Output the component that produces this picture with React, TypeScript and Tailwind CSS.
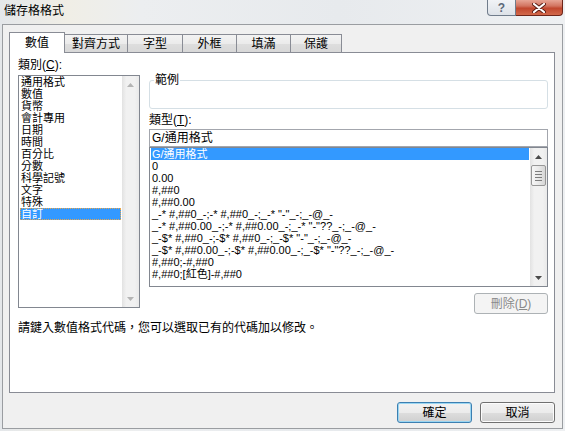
import React from "react";

const categories = [
  "通用格式",
  "數值",
  "貨幣",
  "會計專用",
  "日期",
  "時間",
  "百分比",
  "分數",
  "科學記號",
  "文字",
  "特殊",
  "自訂",
];

const formats = [
  "G/通用格式",
  "0",
  "0.00",
  "#,##0",
  "#,##0.00",
  '_-* #,##0_-;-* #,##0_-;_-* "-"_-;_-@_-',
  '_-* #,##0.00_-;-* #,##0.00_-;_-* "-"??_-;_-@_-',
  '_-$* #,##0_-;-$* #,##0_-;_-$* "-"_-;_-@_-',
  '_-$* #,##0.00_-;-$* #,##0.00_-;_-$* "-"??_-;_-@_-',
  "#,##0;-#,##0",
  "#,##0;[紅色]-#,##0",
];

const tabs = [
  { label: "對齊方式", w: "w-[63px]" },
  { label: "字型", w: "w-[55px]" },
  { label: "外框", w: "w-[54px]" },
  { label: "填滿", w: "w-[54px]" },
  { label: "保護", w: "w-[51px]" },
];

function Arrow({ up, color }: { up?: boolean; color: string }) {
  return (
    <svg width="7" height="4" viewBox="0 0 7 4">
      <path d={up ? "M0 4 L3.5 0 L7 4 Z" : "M0 0 L7 0 L3.5 4 Z"} fill={color} />
    </svg>
  );
}

function ScrollBar({ disabled }: { disabled?: boolean }) {
  const c = disabled ? "#b4b4b4" : "#4a4a4a";
  return (
    <div className="flex w-[17px] flex-col bg-[linear-gradient(to_right,#e2e2e2,#f1f1f1_25%,#f1f1f1_75%,#e9e9e9)]">
      <div className="flex h-[17px] items-center justify-center">
        <Arrow up color={c} />
      </div>
      {!disabled && (
        <div className="mx-[1px] flex h-[21px] flex-col items-center justify-center gap-[2px] rounded-[2px] border border-[#979797] bg-[linear-gradient(to_right,#f6f6f6,#e9e9e9_50%,#d6d6d6)]">
          <div className="h-px w-[7px] bg-[#7d7d7d]" />
          <div className="h-px w-[7px] bg-[#7d7d7d]" />
          <div className="h-px w-[7px] bg-[#7d7d7d]" />
          <div className="h-px w-[7px] bg-[#7d7d7d]" />
        </div>
      )}
      <div className="flex-1" />
      <div className="flex h-[17px] items-center justify-center">
        <Arrow color={c} />
      </div>
    </div>
  );
}

export default function App() {
  return (
    <div className="flex h-[431px] w-[565px] flex-col overflow-hidden bg-[linear-gradient(to_right,#e4e7ea,#f0eee6_12%,#eceef0_25%,#e7eaed_60%,#eef0f2)] font-['Liberation_Sans','Noto_Sans_CJK_TC',sans-serif] text-[12px] leading-[12px] text-black">
      {/* Title bar */}
      <div className="flex h-[24px] items-start justify-between">
        <span className="pl-[4px] pt-[4px] font-['Noto_Sans_CJK_TC',sans-serif]">儲存格格式</span>
        <div className="mr-[2px] flex">
          <div className="flex h-[16px] w-[29px] items-center justify-center rounded-bl-[4px] border border-t-0 border-[#707c8b] bg-[linear-gradient(to_bottom,#f1f3f6,#dde2e8)] text-[12px] font-bold text-[#5b6879]">
            ?
          </div>
          <div className="flex h-[16px] w-[47px] items-center justify-center rounded-br-[4px] border border-l-0 border-t-0 border-[#6e2519] bg-[linear-gradient(to_bottom,#e7a595,#d27460_40%,#c1472e_55%,#d2694b)]">
            <svg width="14" height="10" viewBox="0 0 14 10">
              <path d="M2 1 L12 9 M12 1 L2 9" stroke="#5a1d14" strokeWidth="4" strokeLinecap="round" />
              <path d="M2 1 L12 9 M12 1 L2 9" stroke="#ffffff" strokeWidth="2.2" strokeLinecap="round" />
            </svg>
          </div>
        </div>
      </div>

      {/* Client area */}
      <div className="mx-[2px] flex h-[405px] flex-col border border-[#9a9da1] bg-[#f0f0f0] pl-[6px] pr-[7px] pt-[7px]">
        {/* Tabs */}
        <div className="relative z-10 -mb-px flex items-end">
          <div className="flex h-[21px] w-[56px] items-center justify-center border-x border-t border-[#898c95] bg-white">
            數值
          </div>
          {tabs.map((t) => (
            <div
              key={t.label}
              className={`flex h-[19px] items-center justify-center border-y border-r border-[#898c95] bg-[linear-gradient(to_bottom,#f3f3f3,#ebebeb_50%,#dedede_51%,#d8d8d8)] ${t.w}`}
            >
              {t.label}
            </div>
          ))}
        </div>

        {/* Panel */}
        <div className="flex h-[341px] flex-col border border-[#898c95] bg-white pl-[8px] pr-[6px] pt-[5px]">
          <div className="flex gap-[9px]">
            {/* Category */}
            <div className="flex w-[122px] flex-col">
              <div className="h-[14px] leading-[14px]">
                類別(<span className="underline">C</span>):
              </div>
              <div className="mt-[3px] flex h-[233px] border border-[#828790]">
                <div className="flex flex-1 flex-col">
                  {categories.map((c) =>
                    c === "自訂" ? (
                      <div
                        key={c}
                        className="mx-[1px] h-[12px] whitespace-nowrap bg-[#3399ff] pl-[1px] text-[11px] leading-[12px] text-white outline-1 -outline-offset-1 outline-dotted outline-[#e9a64a]"
                      >
                        {c}
                      </div>
                    ) : (
                      <div key={c} className="mx-[1px] h-[12px] whitespace-nowrap pl-[1px] text-[11px] leading-[12px]">
                        {c}
                      </div>
                    )
                  )}
                </div>
                <ScrollBar disabled />
              </div>
            </div>

            {/* Right column */}
            <div className="flex w-[399px] flex-col pt-[16px]">
              <fieldset className="h-[35px] rounded-[3px] border border-[#d5dfe5]">
                <legend className="ml-[4px] px-[1px] leading-[12px]">範例</legend>
              </fieldset>
              <div className="mt-[4px] h-[14px] leading-[14px]">
                類型(<span className="underline">T</span>):
              </div>
              <div className="mt-[2px] h-[18px] border border-[#a3a6ad] pl-[2px] leading-[16px]">G/通用格式</div>
              <div className="flex h-[140px] border border-[#828790]">
                <div className="flex flex-1 flex-col overflow-hidden">
                  {formats.map((f, i) =>
                    i === 0 ? (
                      <div key={f} className="mx-[1px] h-[12px] whitespace-nowrap bg-[#3399ff] pl-[1px] text-[11px] leading-[12px] text-white">
                        {f}
                      </div>
                    ) : (
                      <div key={f} className="mx-[1px] h-[12px] whitespace-nowrap pl-[1px] text-[11px] leading-[12px]">
                        {f}
                      </div>
                    )
                  )}
                </div>
                <ScrollBar />
              </div>
              <div className="mt-[6px] flex h-[21px] w-[74px] items-center justify-center self-end rounded-[3px] border border-[#adb2b5] bg-[#f4f4f4] text-[#8a8a8a]">
                刪除(<span className="underline">D</span>)
              </div>
            </div>
          </div>

          <div className="mt-[7px] h-[14px] leading-[14px]">請鍵入數值格式代碼，您可以選取已有的代碼加以修改。</div>
        </div>

        {/* Dialog buttons */}
        <div className="mt-[9px] flex justify-end gap-[8px]">
          <div className="flex h-[21px] w-[75px] items-center justify-center rounded-[3px] border border-[#3c7fb1] bg-[linear-gradient(to_bottom,#f2f2f2,#ebebeb_50%,#dddddd_51%,#cfcfcf)] shadow-[inset_0_0_0_1px_#9ad6f2]">
            確定
          </div>
          <div className="flex h-[21px] w-[75px] items-center justify-center rounded-[3px] border border-[#707070] bg-[linear-gradient(to_bottom,#f2f2f2,#ebebeb_50%,#dddddd_51%,#cfcfcf)] shadow-[inset_0_0_0_1px_#fcfcfc]">
            取消
          </div>
        </div>
      </div>
    </div>
  );
}
